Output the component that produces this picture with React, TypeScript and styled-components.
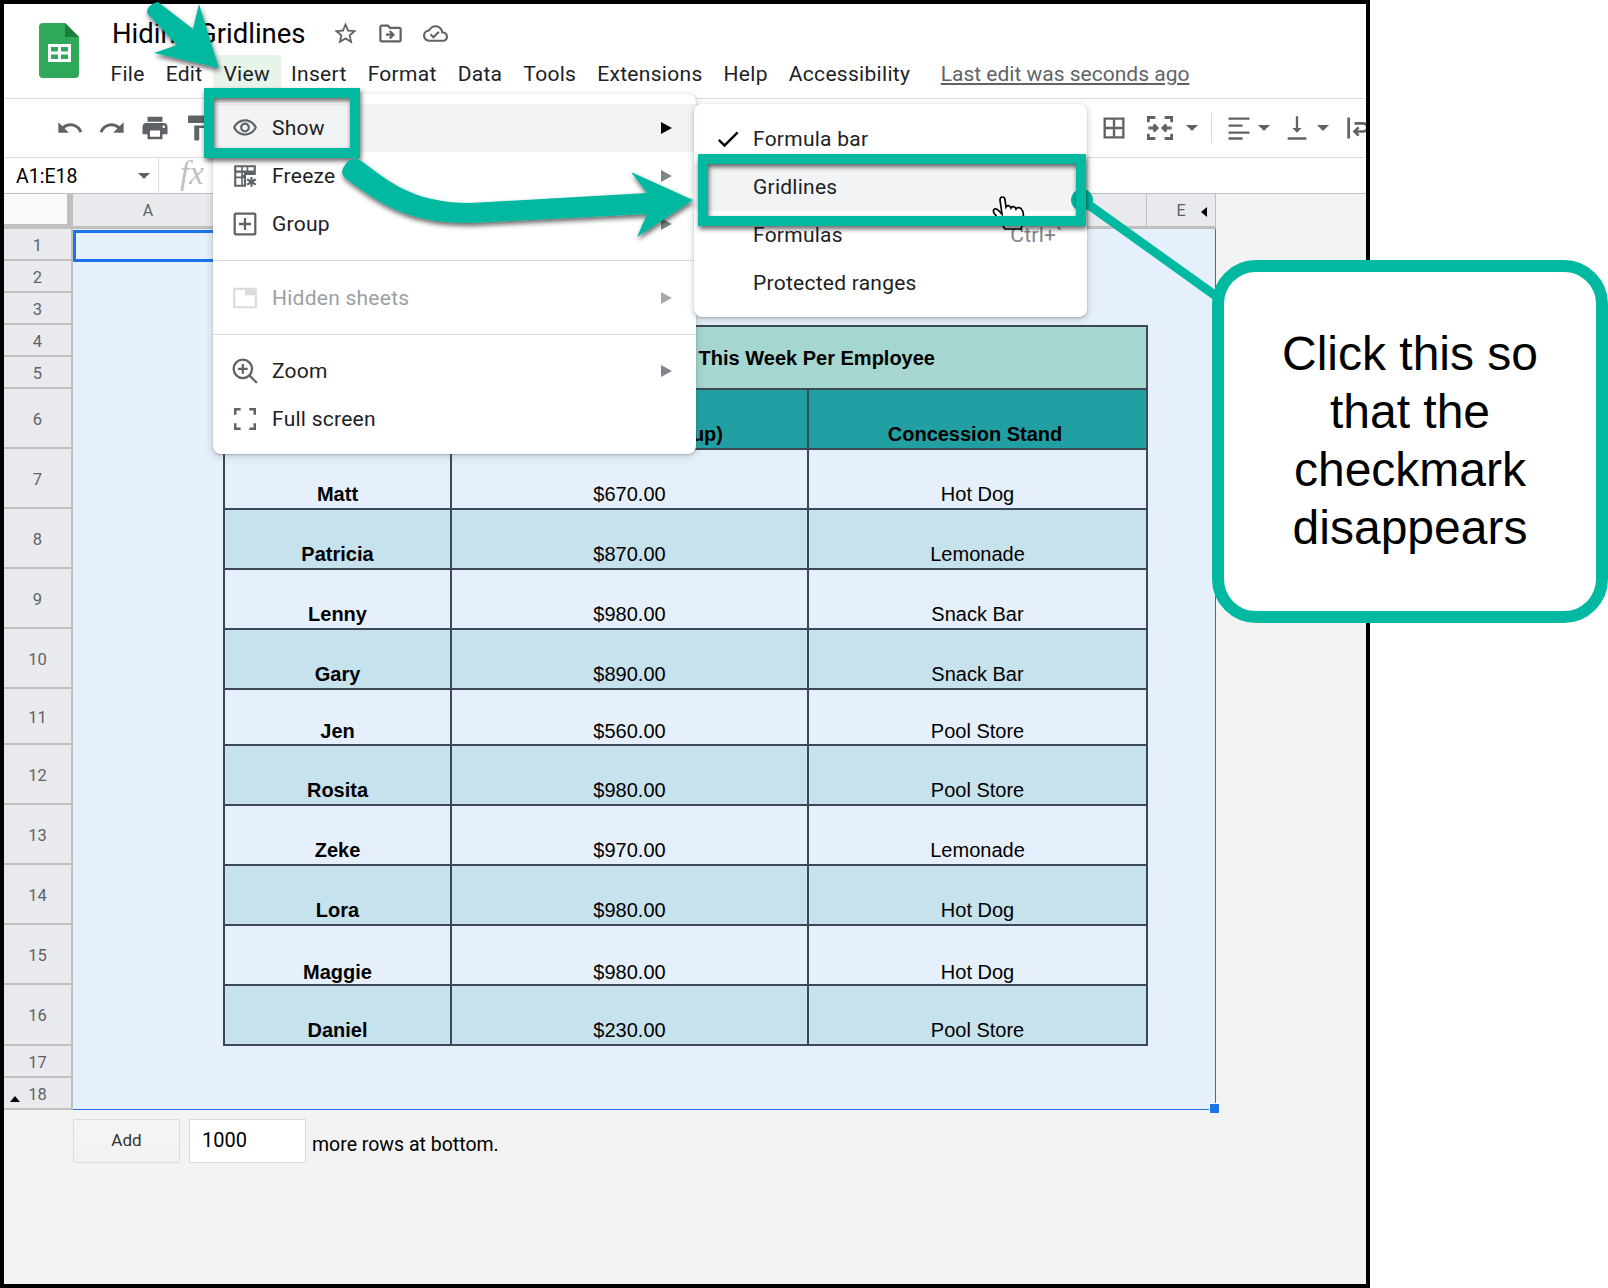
import React, { FC } from 'react';
import styled, { createGlobalStyle } from 'styled-components';

const TEAL = '#00b9a0';
const GRID = '#c0c0c0';
const ICON = '#5f6368';

const PATHS = {
  undo: 'M12.5 8c-2.65 0-5.05.99-6.9 2.6L2 7v9h9l-3.62-3.62c1.39-1.16 3.16-1.88 5.12-1.88 3.54 0 6.55 2.31 7.6 5.5l2.37-.78C21.08 11.03 17.15 8 12.5 8z',
  redo: 'M18.4 10.6C16.55 8.99 14.15 8 11.5 8c-4.65 0-8.58 3.03-9.96 7.22L3.9 16c1.05-3.19 4.05-5.5 7.6-5.5 1.95 0 3.73.72 5.12 1.88L13 16h9V7l-3.6 3.6z',
  print: 'M19 8H5c-1.66 0-3 1.34-3 3v6h4v4h12v-4h4v-6c0-1.66-1.34-3-3-3zm-3 11H8v-5h8v5zm3-7c-.55 0-1-.45-1-1s.45-1 1-1 1 .45 1 1-.45 1-1 1zm-1-9H6v4h12V3z',
  paint: 'M18 4V3c0-.55-.45-1-1-1H5c-.55 0-1 .45-1 1v4c0 .55.45 1 1 1h12c.55 0 1-.45 1-1V6h1v4H9v11c0 .55.45 1 1 1h2c.55 0 1-.45 1-1v-9h8V4h-3z',
  star: 'M22 9.24l-7.19-.62L12 2 9.19 8.63 2 9.24l5.46 4.73L5.82 21 12 17.27 18.18 21l-1.63-7.03L22 9.24zM12 15.4l-3.76 2.27 1-4.28-3.32-2.88 4.38-.38L12 6.1l1.71 4.04 4.38.38-3.32 2.88 1 4.28L12 15.4z',
  folder: 'M20 6h-8l-2-2H4c-1.1 0-2 .9-2 2v12c0 1.1.9 2 2 2h16c1.1 0 2-.9 2-2V8c0-1.1-.9-2-2-2zm0 12H4V6h5.17l2 2H20v10zM12.16 12H8v2h4.16l-1.59 1.59L12 17l4-4-4-4-1.41 1.41z',
  cloud: 'M19.35 10.04C18.67 6.59 15.64 4 12 4 9.11 4 6.6 5.64 5.35 8.04 2.34 8.36 0 10.91 0 14c0 3.31 2.69 6 6 6h13c2.76 0 5-2.24 5-5 0-2.64-2.05-4.78-4.65-4.96zM19 18H6c-2.21 0-4-1.79-4-4 0-2.05 1.53-3.76 3.56-3.97l1.07-.11.5-.95C8.08 7.14 9.94 6 12 6c2.62 0 4.88 1.86 5.39 4.43l.3 1.5 1.53.11c1.56.1 2.78 1.41 2.78 2.96 0 1.65-1.35 3-3 3zm-9-3.82l-2.09-2.09L6.5 13.5 10 17l6.01-6.01-1.41-1.41z',
  check: 'M9 16.17L4.83 12l-1.42 1.41L9 19 21 7l-1.41-1.41z',
  eye: 'M12 6c3.79 0 7.17 2.13 8.82 5.5C19.17 14.87 15.79 17 12 17s-7.17-2.13-8.82-5.5C4.83 8.13 8.21 6 12 6m0-2C7 4 2.73 7.11 1 11.5 2.73 15.89 7 19 12 19s9.27-3.11 11-7.5C21.27 7.11 17 4 12 4zm0 5c1.38 0 2.5 1.12 2.5 2.5S13.38 14 12 14s-2.5-1.12-2.5-2.5S10.62 9 12 9m0-2c-2.48 0-4.5 2.02-4.5 4.5S9.52 16 12 16s4.5-2.02 4.5-4.5S14.48 7 12 7z',
  borders: 'M3 3v18h18V3H3zm8 16H5v-6h6v6zm0-8H5V5h6v6zm8 8h-6v-6h6v6zm0-8h-6V5h6v6z',
  alignLeft: 'M3 3h18v2H3zM3 9h12v2H3zM3 15h18v2H3zM3 20h12v2H3z',
  alignBottom: 'M16 12h-3V2h-2v10H8l4 4 4-4zM4 20v2h16v-2H4z',
  freeze: 'M2 2h20v9H13v11H2zM4 4v3h4.5V4zM10 4v3h3.5V4zM15 4v3h5V4zM4 9v3.5h4.5V9zM10 9v2h1v-2zM4 14v6h4.5v-6zM10 14v6h1v-6z',
};

const GlobalStyle = createGlobalStyle`
  html, body {
    margin: 0;
    background: #fff;
  }
`;

const Page = styled.div`
  position: relative;
  width: 1608px;
  height: 1288px;
  overflow: hidden;
  background: #fff;
  font-family: Roboto, "Liberation Sans", sans-serif;
  color: #202124;
`;

const Frame = styled.div`
  box-sizing: border-box;
  display: flex;
  flex-direction: column;
  width: 1370px;
  height: 1288px;
  border: 4px solid #000;
  overflow: hidden;
  background: #f3f3f3;
`;

const Header = styled.header`
  display: flex;
  flex: none;
  height: 94px;
  padding-left: 35px;
  background: #fff;
  border-bottom: 1px solid #dadce0;
`;

const Logo = styled.svg`
  flex: none;
  width: 40px;
  height: 55px;
  margin-top: 19px;
`;

const TitleColumn = styled.div`
  margin-left: 21px;
  padding-top: 11px;
`;

const TitleRow = styled.div`
  display: flex;
  align-items: center;
  height: 40px;
  padding: 0 0 3px 12px;
  box-sizing: border-box;
`;

const DocTitle = styled.span`
  font-size: 27.5px;
  color: #000;
  white-space: nowrap;
`;

const Glyph = styled.svg<{ $size: number; $gap?: number; $color?: string }>`
  flex: none;
  width: ${(p) => p.$size}px;
  height: ${(p) => p.$size}px;
  margin-left: ${(p) => p.$gap ?? 0}px;
  fill: ${(p) => p.$color ?? ICON};
`;

const StrokeGlyph = styled(Glyph)`
  fill: none;
  stroke: ${(p) => p.$color ?? ICON};
  stroke-width: 2.1;
`;

const MenuBar = styled.nav`
  display: flex;
  align-items: center;
  height: 33px;
  font-size: 21px;
`;

const MenuName = styled.span<{ $open?: boolean }>`
  display: flex;
  box-sizing: border-box;
  align-items: center;
  height: 33px;
  padding: 5px 10.5px 0;
  letter-spacing: 0.3px;
  border-radius: 4px 4px 0 0;
  background: ${(p) => (p.$open ? '#e6f4ea' : 'transparent')};
  white-space: nowrap;
`;

const LastEdit = styled.a`
  margin: 5px 0 0 20px;
  color: ${ICON};
  text-decoration: underline;
  white-space: nowrap;
`;

const Toolbar = styled.div`
  display: flex;
  flex: none;
  align-items: center;
  height: 58px;
  padding-left: 52px;
  background: #fff;
  border-bottom: 1px solid #dadce0;
`;

const Caret = styled.i<{ $gap: number }>`
  flex: none;
  width: 0;
  height: 0;
  margin-left: ${(p) => p.$gap}px;
  border-left: 6px solid transparent;
  border-right: 6px solid transparent;
  border-top: 6px solid ${ICON};
`;

const ToolDivider = styled.i`
  flex: none;
  width: 1px;
  height: 30px;
  margin: 0 13px 0 13px;
  background: #dadce0;
`;

const FormulaBar = styled.div`
  display: flex;
  flex: none;
  align-items: center;
  height: 35px;
  background: #fff;
`;

const NameBox = styled.div`
  display: flex;
  box-sizing: border-box;
  align-items: center;
  justify-content: space-between;
  width: 155px;
  height: 100%;
  padding: 1px 8px 0 12px;
  font-size: 19.5px;
  color: #000;
  border-right: 1px solid #dadce0;
`;

const Fx = styled.span`
  margin: 0 0 4px 21px;
  font-family: "Liberation Serif", serif;
  font-size: 33px;
  font-style: italic;
  color: #bdc1c6;
`;

const ColumnStrip = styled.div`
  display: flex;
  flex: none;
  height: 35px;
  border-top: 1px solid ${GRID};
`;

const Corner = styled.div`
  box-sizing: border-box;
  flex: none;
  width: 69px;
  height: 100%;
  background: #f8f9fa;
  border-right: 6px solid ${GRID};
  border-bottom: 5px solid ${GRID};
`;

const ColumnHead = styled.div<{ $width: number }>`
  position: relative;
  display: flex;
  box-sizing: border-box;
  flex: none;
  align-items: center;
  justify-content: center;
  width: ${(p) => p.$width}px;
  height: 100%;
  font-size: 16px;
  color: ${ICON};
  background: #e8eaed;
  border-right: 1.5px solid ${GRID};
  border-bottom: 3px solid ${GRID};
`;

const ColumnCollapse = styled.i`
  position: absolute;
  top: 13px;
  right: 8px;
  border-top: 5px solid transparent;
  border-bottom: 5px solid transparent;
  border-right: 6px solid #000;
`;

const Body = styled.div`
  display: flex;
  flex: none;
`;

const RowHeads = styled.div`
  flex: none;
  width: 69px;
`;

const RowHead = styled.div<{ $height: number }>`
  position: relative;
  display: flex;
  box-sizing: border-box;
  align-items: center;
  justify-content: center;
  height: ${(p) => p.$height}px;
  padding: 2px 0 0 0;
  font-size: 16.5px;
  color: ${ICON};
  background: #e8eaed;
  border-right: 2px solid ${GRID};
  border-bottom: 2px solid ${GRID};
`;

const RowCollapse = styled.i`
  position: absolute;
  left: 6px;
  bottom: 6px;
  border-left: 5px solid transparent;
  border-right: 5px solid transparent;
  border-bottom: 6px solid #000;
`;

const Sheet = styled.div`
  position: relative;
  box-sizing: border-box;
  flex: none;
  width: 1143px;
  height: 881px;
  padding: 96px 0 0 150px;
  background: #e6f0fc;
  border-right: 1.5px solid #1a73e8;
  border-bottom: 1.5px solid #1a73e8;
`;

const ActiveCell = styled.div`
  position: absolute;
  top: 1px;
  left: 0;
  box-sizing: border-box;
  width: 152px;
  height: 32px;
  border: 3px solid #1a73e8;
`;

const FillHandle = styled.div`
  position: absolute;
  right: -5px;
  bottom: -5px;
  box-sizing: border-box;
  width: 11px;
  height: 11px;
  background: #1a73e8;
  border: 1px solid #fff;
`;

const DataTable = styled.div`
  box-sizing: border-box;
  width: 925px;
  font-family: "Liberation Sans", Arial, sans-serif;
  font-size: 20px;
  color: #000;
  border-top: 2px solid #3d4856;
  border-left: 2px solid #3d4856;
  border-right: 2px solid #3d4856;
`;

const TitleBand = styled.div`
  display: flex;
  box-sizing: border-box;
  align-items: center;
  justify-content: flex-end;
  height: 63px;
  padding: 2px 211px 0 0;
  font-weight: 700;
  background: #a5d6cf;
  border-bottom: 2px solid #3d4856;
`;

const TableRow = styled.div<{ $height: number; $tint?: string }>`
  display: grid;
  box-sizing: border-box;
  grid-template-columns: 227px 357px 1fr;
  height: ${(p) => p.$height}px;
  background: ${(p) => p.$tint ?? 'transparent'};
  border-bottom: 2px solid #3d4856;
`;

const Cell = styled.div<{ $strong?: boolean; $last?: boolean; $trim?: number; $lift?: number }>`
  display: flex;
  box-sizing: border-box;
  align-items: flex-end;
  justify-content: center;
  padding: 0 ${(p) => p.$trim ?? 0}px ${(p) => p.$lift ?? 2}px 0;
  font-weight: ${(p) => (p.$strong ? 700 : 400)};
  line-height: 24px;
  border-right: ${(p) => (p.$last ? '0' : '2px solid #3d4856')};
`;

const HeaderCell = styled(Cell)<{ $end?: boolean }>`
  justify-content: ${(p) => (p.$end ? 'flex-end' : 'center')};
`;

const AddRows = styled.div`
  display: flex;
  flex: none;
  padding: 9px 0 0 69px;
`;

const AddButton = styled.div`
  display: flex;
  box-sizing: border-box;
  align-items: center;
  justify-content: center;
  width: 107px;
  height: 44px;
  padding-bottom: 3px;
  font-size: 17px;
  color: #333;
  background: linear-gradient(#f5f5f5, #f1f1f1);
  border: 1px solid #dcdcdc;
  border-radius: 2px;
`;

const RowCount = styled.div`
  display: flex;
  box-sizing: border-box;
  align-items: center;
  width: 117px;
  height: 44px;
  margin-left: 9px;
  padding: 0 0 2px 12px;
  font-size: 20px;
  color: #000;
  background: #fff;
  border: 1px solid #d9d9d9;
`;

const AddNote = styled.span`
  margin: 14px 0 0 6px;
  font-size: 19.5px;
  color: #000;
`;

const Popup = styled.div<{ $left: number; $top: number; $width: number; $height: number; $inset: number }>`
  position: absolute;
  left: ${(p) => p.$left}px;
  top: ${(p) => p.$top}px;
  box-sizing: border-box;
  width: ${(p) => p.$width}px;
  height: ${(p) => p.$height}px;
  padding-top: ${(p) => p.$inset}px;
  font-size: 21px;
  letter-spacing: 0.25px;
  background: #fff;
  border-radius: 8px;
  box-shadow: 0 2px 6px 2px rgba(60, 64, 67, 0.15), 0 1px 2px rgba(60, 64, 67, 0.3);
`;

const PopupRow = styled.div<{ $active?: boolean; $muted?: boolean }>`
  display: flex;
  align-items: center;
  height: 48px;
  padding-left: 19px;
  color: ${(p) => (p.$muted ? '#9aa0a6' : '#202124')};
  background: ${(p) => (p.$active ? '#f1f3f4' : 'transparent')};
`;

const PopupLabel = styled.span`
  margin-left: 14px;
  white-space: nowrap;
`;

const CheckSlot = styled.span`
  display: flex;
  box-sizing: border-box;
  flex: none;
  width: 41px;
  margin-left: -1px;
  padding-left: 2px;
`;

const PopupArrow = styled.i<{ $color: string }>`
  margin: 0 24px 0 auto;
  border-top: 6px solid transparent;
  border-bottom: 6px solid transparent;
  border-left: 11px solid ${(p) => p.$color};
`;

const Shortcut = styled.span`
  margin: 0 24px 0 auto;
  color: #80868b;
`;

const PopupDivider = styled.hr`
  height: 1px;
  margin: 12.25px 0;
  border: 0;
  background: #dadce0;
`;

const Annotations = styled.svg`
  position: absolute;
  top: 0;
  left: 0;
  width: 1608px;
  height: 1288px;
  pointer-events: none;
`;

const Callout = styled.div`
  position: absolute;
  left: 1212px;
  top: 260px;
  display: flex;
  box-sizing: border-box;
  align-items: center;
  justify-content: center;
  width: 396px;
  height: 363px;
  padding-bottom: 2px;
  font-family: "Liberation Sans", Arial, sans-serif;
  font-size: 48px;
  line-height: 58px;
  text-align: center;
  color: #000;
  background: #fff;
  border: 12px solid ${TEAL};
  border-radius: 44px;
`;

const COLUMNS: [string, number][] = [['A', 151], ['B', 226], ['C', 358], ['D', 339]];

const ROW_HEIGHTS = [32, 32, 32, 32, 32, 60, 60, 60, 60, 60, 56, 60, 60, 60, 60, 61, 32, 32];

const EMPLOYEES: { name: string; pay: string; stand: string; height: number; lift?: number }[] = [
  { name: 'Matt', pay: '$670.00', stand: 'Hot Dog', height: 60 },
  { name: 'Patricia', pay: '$870.00', stand: 'Lemonade', height: 60 },
  { name: 'Lenny', pay: '$980.00', stand: 'Snack Bar', height: 60 },
  { name: 'Gary', pay: '$890.00', stand: 'Snack Bar', height: 60 },
  { name: 'Jen', pay: '$560.00', stand: 'Pool Store', height: 56, lift: 1 },
  { name: 'Rosita', pay: '$980.00', stand: 'Pool Store', height: 60 },
  { name: 'Zeke', pay: '$970.00', stand: 'Lemonade', height: 60 },
  { name: 'Lora', pay: '$980.00', stand: 'Hot Dog', height: 60 },
  { name: 'Maggie', pay: '$980.00', stand: 'Hot Dog', height: 60, lift: 0 },
  { name: 'Daniel', pay: '$230.00', stand: 'Pool Store', height: 60 },
];

const Icon: FC<{ d: string; size: number; gap?: number; color?: string }> = ({ color, d, gap, size }) => (
  <Glyph $color={color} $gap={gap} $size={size} viewBox='0 0 24 24'>
    <path d={d} fillRule='evenodd' />
  </Glyph>
);

const SheetsLogo: FC = () => (
  <Logo viewBox='0 0 40 55'>
    <path d='M4 0H26L40 14V51a4 4 0 0 1-4 4H4a4 4 0 0 1-4-4V4a4 4 0 0 1 4-4z' fill='#2fa85a' />
    <path d='M26 0L40 14H26z' fill='#188038' />
    <path d='M9 21H32V39H9zM12 24v4.5h7V24zM22 24v4.5h7V24zM12 31.5V36h7v-4.5zM22 31.5V36h7v-4.5z' fill='#fff' fillRule='evenodd' />
  </Logo>
);

const MergeIcon: FC = () => (
  <StrokeGlyph $gap={18} $size={28} viewBox='0 0 24 24'>
    <path d='M2 7V3h6M16 3h6v4M2 17v4h6M16 21h6v-4M2 12h7M6.5 9l3 3-3 3M22 12h-7M17.5 9l-3 3 3 3' strokeWidth='2.4' />
  </StrokeGlyph>
);

const WrapIcon: FC = () => (
  <StrokeGlyph $gap={15} $size={28} viewBox='0 0 24 24'>
    <path d='M4 3v18M9 8h7.5a3.5 3.5 0 0 1 0 7H9M12.5 11.5L9 15l3.5 3.5' strokeWidth='2.3' />
  </StrokeGlyph>
);

const FreezeIcon: FC = () => (
  <Glyph $size={26} viewBox='0 0 24 24'>
    <path d={PATHS.freeze} fillRule='evenodd' />
    <path d='M18 13v9M14 15l8 5M22 15l-8 5' fill='none' stroke={ICON} strokeWidth='2' />
  </Glyph>
);

const GroupIcon: FC = () => (
  <StrokeGlyph $size={26} viewBox='0 0 24 24'>
    <rect height='19' rx='1' width='19' x='2.5' y='2.5' />
    <path d='M12 6.5v11M6.5 12h11' />
  </StrokeGlyph>
);

const HiddenSheetsIcon: FC = () => (
  <Glyph $color='#dadce0' $size={26} viewBox='0 0 24 24'>
    <path d='M2 2.5h20a1 1 0 0 1 1 1v17a1 1 0 0 1-1 1H2a1 1 0 0 1-1-1v-17a1 1 0 0 1 1-1zM3 4.5v15h18v-10h-9v-5z' fillRule='evenodd' />
  </Glyph>
);

const ZoomIcon: FC = () => (
  <StrokeGlyph $size={26} viewBox='0 0 24 24'>
    <circle cx='10' cy='10' r='8.5' />
    <path d='M10 5.5v9M5.5 10h9M16 16l7 7' />
  </StrokeGlyph>
);

const FullScreenIcon: FC = () => (
  <StrokeGlyph $size={26} viewBox='0 0 24 24'>
    <path d='M3 8V3h5M16 3h5v5M21 16v5h-5M8 21H3v-5' strokeWidth='2.3' />
  </StrokeGlyph>
);

// everything teal sits on top of the screenshot, so it is one drawing
const Markup: FC = () => (
  <Annotations viewBox='0 0 1608 1288'>
    <defs>
      <filter height='140%' id='markShadow' width='120%' x='-10%' y='-20%'>
        <feDropShadow dx='1' dy='3' floodColor='#000' floodOpacity='0.6' stdDeviation='2.5' />
      </filter>
    </defs>
    <path
      d='M1000 200C1000 196 1005 196 1005 200L1006 207C1007 205 1010 205 1011 208C1012 206 1015 206 1016 209C1017 207 1021 207 1022 210C1024 212 1024 222 1021 229L1005 229C1002 224 998 218 994 213C992 209 996 207 999 211L1002 214Z'
      fill='#fff'
      stroke='#000'
      strokeWidth='1.7'
    />
    <path d='M1082 200L1216 296' stroke={TEAL} strokeWidth='9' />
    <circle cx='1082' cy='200' fill={TEAL} r='11' />
    <g filter='url(#markShadow)'>
      <rect fill='none' height='60' stroke={TEAL} strokeWidth='10' width='146' x='209' y='93' />
      <rect fill='none' height='62' stroke={TEAL} strokeWidth='10' width='378' x='703' y='159' />
      <path
        d='M345 165Q350 156 360 160C385 178 410 203 470 203L647 193L631 172L693 200L637 237L647 214L470 223C412 223 385 208 345 178Q339 172 345 165Z'
        fill={TEAL}
      />
      <path
        d='M158 2L193 29L199 4L219 68L154 53L177 45L147 13Q146 5 158 2Z'
        fill={TEAL}
      />
    </g>
  </Annotations>
);

export default function App () {
  return (
    <Page>
      <GlobalStyle />
      <Frame>
        <Header>
          <SheetsLogo />
          <TitleColumn>
            <TitleRow>
              <DocTitle>Hiding Gridlines</DocTitle>
              <Icon d={PATHS.star} gap={26} size={27} />
              <Icon d={PATHS.folder} gap={18} size={27} />
              <Icon d={PATHS.cloud} gap={19} size={25} />
            </TitleRow>
            <MenuBar>
              <MenuName>File</MenuName>
              <MenuName>Edit</MenuName>
              <MenuName $open>View</MenuName>
              <MenuName>Insert</MenuName>
              <MenuName>Format</MenuName>
              <MenuName>Data</MenuName>
              <MenuName>Tools</MenuName>
              <MenuName>Extensions</MenuName>
              <MenuName>Help</MenuName>
              <MenuName>Accessibility</MenuName>
              <LastEdit>Last edit was seconds ago</LastEdit>
            </MenuBar>
          </TitleColumn>
        </Header>
        <Toolbar>
          <Icon d={PATHS.undo} size={28} />
          <Icon d={PATHS.redo} gap={14} size={28} />
          <Icon d={PATHS.print} gap={14} size={30} />
          <Icon d={PATHS.paint} gap={13} size={30} />
          <Icon d={PATHS.borders} gap={887} size={28} />
          <MergeIcon />
          <Caret $gap={12} />
          <ToolDivider />
          <Icon d={PATHS.alignLeft} size={28} />
          <Caret $gap={5} />
          <Icon d={PATHS.alignBottom} gap={13} size={28} />
          <Caret $gap={6} />
          <WrapIcon />
        </Toolbar>
        <FormulaBar>
          <NameBox>
            A1:E18
            <Caret $gap={0} />
          </NameBox>
          <Fx>fx</Fx>
        </FormulaBar>
        <ColumnStrip>
          <Corner />
          {COLUMNS.map(([label, width]) => (
            <ColumnHead $width={width} key={label}>{label}</ColumnHead>
          ))}
          <ColumnHead $width={69}>
            E
            <ColumnCollapse />
          </ColumnHead>
        </ColumnStrip>
        <Body>
          <RowHeads>
            {ROW_HEIGHTS.map((height, index) => (
              <RowHead $height={height} key={index}>
                {index === 17 && <RowCollapse />}
                {index + 1}
              </RowHead>
            ))}
          </RowHeads>
          <Sheet>
            <ActiveCell />
            <DataTable>
              <TitleBand>This Week Per Employee</TitleBand>
              <TableRow $height={60} $tint='#229fa3'>
                <HeaderCell $strong />
                <HeaderCell $end $strong $trim={84}>up)</HeaderCell>
                <HeaderCell $last $strong $trim={5}>Concession Stand</HeaderCell>
              </TableRow>
              {EMPLOYEES.map(({ height, lift, name, pay, stand }, index) => (
                <TableRow $height={height} $tint={index % 2 ? '#c6e2ed' : undefined} key={name}>
                  <Cell $lift={lift} $strong>{name}</Cell>
                  <Cell $lift={lift}>{pay}</Cell>
                  <Cell $last $lift={lift}>{stand}</Cell>
                </TableRow>
              ))}
            </DataTable>
            <FillHandle />
          </Sheet>
        </Body>
        <AddRows>
          <AddButton>Add</AddButton>
          <RowCount>1000</RowCount>
          <AddNote>more rows at bottom.</AddNote>
        </AddRows>
      </Frame>
      <Popup $height={360} $inset={10} $left={213} $top={94} $width={483}>
        <PopupRow $active>
          <Icon d={PATHS.eye} size={26} />
          <PopupLabel>Show</PopupLabel>
          <PopupArrow $color='#000' />
        </PopupRow>
        <PopupRow>
          <FreezeIcon />
          <PopupLabel>Freeze</PopupLabel>
          <PopupArrow $color='#80868b' />
        </PopupRow>
        <PopupRow>
          <GroupIcon />
          <PopupLabel>Group</PopupLabel>
          <PopupArrow $color='#80868b' />
        </PopupRow>
        <PopupDivider />
        <PopupRow $muted>
          <HiddenSheetsIcon />
          <PopupLabel>Hidden sheets</PopupLabel>
          <PopupArrow $color='#a6a9ad' />
        </PopupRow>
        <PopupDivider />
        <PopupRow>
          <ZoomIcon />
          <PopupLabel>Zoom</PopupLabel>
          <PopupArrow $color='#80868b' />
        </PopupRow>
        <PopupRow>
          <FullScreenIcon />
          <PopupLabel>Full screen</PopupLabel>
        </PopupRow>
      </Popup>
      <Popup $height={213} $inset={11} $left={694} $top={104} $width={393}>
        <PopupRow>
          <CheckSlot>
            <Icon color='#000' d={PATHS.check} size={28} />
          </CheckSlot>
          Formula bar
        </PopupRow>
        <PopupRow $active>
          <CheckSlot />
          Gridlines
        </PopupRow>
        <PopupRow>
          <CheckSlot />
          Formulas
          <Shortcut>Ctrl+`</Shortcut>
        </PopupRow>
        <PopupRow>
          <CheckSlot />
          Protected ranges
        </PopupRow>
      </Popup>
      <Markup />
      <Callout>
        <span>
          Click this so<br />that the<br />checkmark<br />disappears
        </span>
      </Callout>
    </Page>
  );
}
